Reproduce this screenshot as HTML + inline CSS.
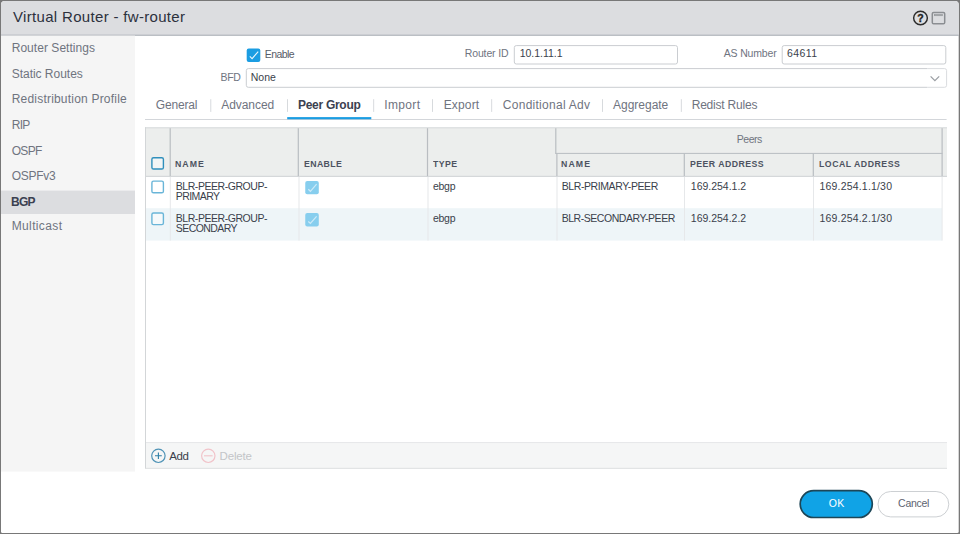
<!DOCTYPE html>
<html lang="en"><head><meta charset="utf-8"><title>Virtual Router - fw-router</title>
<style>
html,body{margin:0;padding:0;}
body{width:960px;height:534px;overflow:hidden;background:#787878;font-family:'Liberation Sans', sans-serif;position:relative;}
#bg{position:absolute;left:0;top:0;}
.t{position:absolute;white-space:pre;line-height:1;}
</style></head><body>
<svg id="bg" width="960" height="534" viewBox="0 0 960 534">
<path d="M1.0,4.5 Q1.0,1.0 4.5,1.0 H955.2 Q958.7,1.0 958.7,4.5 V531.4 Q958.7,532.9 957.2,532.9 H2.5 Q1.0,532.9 1.0,531.4 Z" fill="#ffffff" stroke="none" stroke-width="1" />
<path d="M1.0,35.2 V4.5 Q1.0,1.0 4.5,1.0 H955.2 Q958.7,1.0 958.7,4.5 V35.2 Z" fill="#dcdde0" stroke="none" stroke-width="1" />
<rect x="1.00" y="34.75" width="957.70" height="0.90" fill="#9ca2aa" />
<rect x="1.00" y="35.60" width="134.00" height="436.00" fill="#f5f5f5" />
<rect x="1.00" y="190.60" width="134.00" height="23.40" fill="#dcdde0" />
<rect x="514.30" y="45.60" width="163.20" height="18.40" fill="#fff" stroke="#cacdd1" stroke-width="1" rx="2"/>
<rect x="782.20" y="45.60" width="163.60" height="18.40" fill="#fff" stroke="#cacdd1" stroke-width="1" rx="2"/>
<rect x="246.30" y="68.60" width="700.30" height="18.70" fill="#fff" rx="2" />
<path d="M927.1,68.6 H248.3 Q246.3,68.6 246.3,70.6 V85.3 Q246.3,87.3 248.3,87.3 H927.1" fill="none" stroke="#cacdd1" stroke-width="1" />
<path d="M927.1,68.6 H944.6 Q946.6,68.6 946.6,70.6 V85.3 Q946.6,87.3 944.6,87.3 H927.1" fill="none" stroke="#dadcdf" stroke-width="1" />
<path d="M930.6 76.4 L934.9 80.6 L939.2 76.4" fill="none" stroke="#9a9ea3" stroke-width="1.25" />
<rect x="246.70" y="48.50" width="13.60" height="13.40" fill="#1b9de2" rx="2" />
<path d="M249.8 56.3 L252.1 58.6 L258.2 51.6" fill="none" stroke="#eaf6fd" stroke-width="1.1" />
<rect x="145.00" y="119.00" width="801.60" height="0.90" fill="#cfd2d6" />
<rect x="287.20" y="117.10" width="84.10" height="2.20" fill="#1b9de2" />
<rect x="210.35" y="99.20" width="0.90" height="12.70" fill="#d3d6da" />
<rect x="287.05" y="99.20" width="0.90" height="12.70" fill="#d3d6da" />
<rect x="373.25" y="99.20" width="0.90" height="12.70" fill="#d3d6da" />
<rect x="432.05" y="99.20" width="0.90" height="12.70" fill="#d3d6da" />
<rect x="491.25" y="99.20" width="0.90" height="12.70" fill="#d3d6da" />
<rect x="602.05" y="99.20" width="0.90" height="12.70" fill="#d3d6da" />
<rect x="680.85" y="99.20" width="0.90" height="12.70" fill="#d3d6da" />
<rect x="145.50" y="127.50" width="801.50" height="48.80" fill="#eceeed" />
<rect x="145.00" y="127.10" width="802.00" height="1.40" fill="#dde0e2" />
<rect x="145.00" y="127.20" width="1.00" height="341.20" fill="#d3d6d8" />
<rect x="146.00" y="175.85" width="801.00" height="1.00" fill="#cfd2d4" />
<rect x="146.00" y="208.20" width="796.00" height="32.40" fill="#eef5f8" />
<rect x="169.60" y="128.20" width="1.20" height="48.00" fill="#b9bdc1" />
<rect x="297.70" y="128.20" width="1.20" height="48.00" fill="#b9bdc1" />
<rect x="426.90" y="128.20" width="1.20" height="48.00" fill="#b9bdc1" />
<rect x="555.20" y="128.20" width="1.20" height="25.40" fill="#b9bdc1" />
<rect x="555.20" y="152.90" width="387.30" height="1.00" fill="#b9bdc1" />
<rect x="556.30" y="153.60" width="1.20" height="22.60" fill="#b9bdc1" />
<rect x="683.70" y="153.60" width="1.20" height="22.60" fill="#b9bdc1" />
<rect x="812.70" y="153.60" width="1.20" height="22.60" fill="#b9bdc1" />
<rect x="941.50" y="128.20" width="1.20" height="48.00" fill="#b9bdc1" />
<rect x="169.80" y="176.80" width="1.00" height="63.80" fill="#e6e8ea" />
<rect x="298.50" y="176.80" width="1.00" height="63.80" fill="#e6e8ea" />
<rect x="427.50" y="176.80" width="1.00" height="63.80" fill="#e6e8ea" />
<rect x="556.50" y="176.80" width="1.00" height="63.80" fill="#e6e8ea" />
<rect x="684.00" y="176.80" width="1.00" height="63.80" fill="#e6e8ea" />
<rect x="813.00" y="176.80" width="1.00" height="63.80" fill="#e6e8ea" />
<rect x="941.60" y="176.80" width="1.00" height="63.80" fill="#e6e8ea" />
<rect x="151.90" y="157.70" width="11.50" height="11.30" fill="#f3f5f5" stroke="#2f8fbc" stroke-width="1.4" rx="1.6"/>
<rect x="151.90" y="181.10" width="11.50" height="11.70" fill="#ffffff" stroke="#69b5d8" stroke-width="1.4" rx="1.6"/>
<rect x="151.90" y="213.00" width="11.50" height="11.60" fill="#f5f9fb" stroke="#69b5d8" stroke-width="1.4" rx="1.6"/>
<rect x="305.25" y="180.90" width="13.55" height="13.35" fill="#87ceee" rx="2" />
<path d="M308.3 189.3 L310.4 191.3 L316.6 184.1" fill="none" stroke="#cdeaf8" stroke-width="1.2" />
<rect x="305.25" y="213.10" width="13.55" height="13.35" fill="#87ceee" rx="2" />
<path d="M308.3 221.5 L310.4 223.5 L316.6 216.3" fill="none" stroke="#cdeaf8" stroke-width="1.2" />
<rect x="146.00" y="442.50" width="801.00" height="25.70" fill="#f5f6f6" />
<rect x="146.00" y="442.15" width="801.00" height="0.90" fill="#e3e5e7" />
<rect x="145.00" y="467.85" width="802.00" height="0.90" fill="#d9dbdd" />
<circle cx="158.4" cy="455.8" r="6.7" fill="none" stroke="#4f93b6" stroke-width="1.2"/>
<path d="M155 455.8 H161.8 M158.4 452.6 V459" fill="none" stroke="#2f7fa6" stroke-width="1.1" />
<circle cx="208.3" cy="455.8" r="6.7" fill="none" stroke="#f1c3c9" stroke-width="1.2"/>
<path d="M204 455.8 H212.6" fill="none" stroke="#f1c3c9" stroke-width="1.1" />
<rect x="800.20" y="490.60" width="72.10" height="26.90" fill="#10a3e6" stroke="#1d4657" stroke-width="1.7" rx="13.5"/>
<rect x="878.00" y="491.50" width="70.80" height="25.40" fill="#ffffff" stroke="#cdd0d3" stroke-width="1" rx="12.7"/>
<circle cx="920.5" cy="18.0" r="6.85" fill="none" stroke="#2b2b2b" stroke-width="1.45"/>
<text x="920.5" y="22" text-anchor="middle" font-family="Liberation Sans, sans-serif" font-weight="700" font-size="10.5" fill="#222" stroke="#222" stroke-width="0.35">?</text>
<rect x="932.30" y="12.50" width="12.40" height="11.30" fill="none" stroke="#8b8e92" stroke-width="1.5" rx="1.3"/>
<rect x="934.30" y="14.30" width="8.40" height="1.50" fill="#a9acaf" />
<rect x="934.30" y="14.30" width="8.40" height="1.50" fill="none" stroke="#8e9194" stroke-width="0.5"/>
</svg>
<div class="hdr">
<span class="t" style="left:13.0px;top:9px;font-size:15px;color:#2c313d;letter-spacing:0.322px;">Virtual Router - fw-router</span>
</div>
<div class="nav">
<span class="t" style="left:11.7px;top:42px;font-size:12px;color:#6f747f;letter-spacing:0.042px;">Router Settings</span>
<span class="t" style="left:11.7px;top:68px;font-size:12px;color:#6f747f;letter-spacing:-0.023px;">Static Routes</span>
<span class="t" style="left:11.7px;top:93px;font-size:12px;color:#6f747f;letter-spacing:0.204px;">Redistribution Profile</span>
<span class="t" style="left:11.7px;top:119px;font-size:12px;color:#6f747f;letter-spacing:-0.700px;">RIP</span>
<span class="t" style="left:11.7px;top:145px;font-size:12px;color:#6f747f;letter-spacing:-0.700px;">OSPF</span>
<span class="t" style="left:11.7px;top:170px;font-size:12px;color:#6f747f;letter-spacing:-0.252px;">OSPFv3</span>
<span class="t" style="left:11.7px;top:220px;font-size:12px;color:#6f747f;letter-spacing:0.370px;">Multicast</span>
<span class="t" style="left:11.0px;top:196px;font-size:12px;color:#3b4150;letter-spacing:-0.700px;font-weight:700;">BGP</span>
</div>
<div class="form">
<span class="t" style="left:264.7px;top:49px;font-size:10.5px;color:#565c68;letter-spacing:-0.541px;">Enable</span>
<span class="t" style="left:464.7px;top:48px;font-size:10.5px;color:#6f747f;letter-spacing:-0.117px;">Router ID</span>
<span class="t" style="left:723.7px;top:48px;font-size:10.5px;color:#6f747f;letter-spacing:-0.160px;">AS Number</span>
<span class="t" style="left:220.5px;top:72px;font-size:10.5px;color:#6f747f;letter-spacing:-0.350px;">BFD</span>
<span class="t" style="left:519.7px;top:48px;font-size:10.5px;color:#3a3f4b;letter-spacing:-0.027px;">10.1.11.1</span>
<span class="t" style="left:787.0px;top:48px;font-size:10.5px;color:#3a3f4b;letter-spacing:0.395px;">64611</span>
<span class="t" style="left:250.8px;top:72px;font-size:10.5px;color:#3a3f4b;letter-spacing:-0.036px;">None</span>
</div>
<div class="tabs">
<span class="t" style="left:155.8px;top:99px;font-size:12px;color:#6f747f;letter-spacing:-0.167px;">General</span>
<span class="t" style="left:221.2px;top:99px;font-size:12px;color:#6f747f;letter-spacing:-0.054px;">Advanced</span>
<span class="t" style="left:384.2px;top:99px;font-size:12px;color:#6f747f;letter-spacing:0.357px;">Import</span>
<span class="t" style="left:443.7px;top:99px;font-size:12px;color:#6f747f;letter-spacing:0.163px;">Export</span>
<span class="t" style="left:502.8px;top:99px;font-size:12px;color:#6f747f;letter-spacing:0.272px;">Conditional Adv</span>
<span class="t" style="left:613.0px;top:99px;font-size:12px;color:#6f747f;letter-spacing:-0.011px;">Aggregate</span>
<span class="t" style="left:691.7px;top:99px;font-size:12px;color:#6f747f;letter-spacing:-0.203px;">Redist Rules</span>
<span class="t" style="left:298.0px;top:99px;font-size:12px;color:#3b4150;letter-spacing:-0.284px;font-weight:700;">Peer Group</span>
</div>
<div class="grid-head">
<span class="t" style="left:175.3px;top:159.4px;font-size:9.5px;color:#4d5361;letter-spacing:1.143px;transform:scaleX(0.92);transform-origin:0 0;font-weight:700;">NAME</span>
<span class="t" style="left:304.2px;top:159.4px;font-size:9.5px;color:#4d5361;letter-spacing:0.405px;transform:scaleX(0.92);transform-origin:0 0;font-weight:700;">ENABLE</span>
<span class="t" style="left:433.0px;top:159.4px;font-size:9.5px;color:#4d5361;letter-spacing:0.425px;transform:scaleX(0.92);transform-origin:0 0;font-weight:700;">TYPE</span>
<span class="t" style="left:561.3px;top:159.4px;font-size:9.5px;color:#4d5361;letter-spacing:1.200px;transform:scaleX(0.92);transform-origin:0 0;font-weight:700;">NAME</span>
<span class="t" style="left:689.7px;top:159.4px;font-size:9.5px;color:#4d5361;letter-spacing:0.490px;transform:scaleX(0.92);transform-origin:0 0;font-weight:700;">PEER ADDRESS</span>
<span class="t" style="left:818.7px;top:159.4px;font-size:9.5px;color:#4d5361;letter-spacing:0.544px;transform:scaleX(0.92);transform-origin:0 0;font-weight:700;">LOCAL ADDRESS</span>
<span class="t" style="left:736.8px;top:134px;font-size:10.5px;color:#6f747f;letter-spacing:-0.484px;">Peers</span>
</div>
<div class="grid-body">
<span class="t" style="left:175.8px;top:181px;font-size:10.5px;color:#3a3f4b;letter-spacing:-0.451px;">BLR-PEER-GROUP-</span>
<span class="t" style="left:175.8px;top:191px;font-size:10.5px;color:#3a3f4b;letter-spacing:-0.576px;">PRIMARY</span>
<span class="t" style="left:175.8px;top:213px;font-size:10.5px;color:#3a3f4b;letter-spacing:-0.451px;">BLR-PEER-GROUP-</span>
<span class="t" style="left:175.8px;top:223px;font-size:10.5px;color:#3a3f4b;letter-spacing:-0.579px;">SECONDARY</span>
<span class="t" style="left:433.0px;top:181px;font-size:10.5px;color:#3a3f4b;letter-spacing:-0.286px;">ebgp</span>
<span class="t" style="left:433.0px;top:213px;font-size:10.5px;color:#3a3f4b;letter-spacing:-0.286px;">ebgp</span>
<span class="t" style="left:561.7px;top:181px;font-size:10.5px;color:#3a3f4b;letter-spacing:-0.407px;">BLR-PRIMARY-PEER</span>
<span class="t" style="left:561.7px;top:213px;font-size:10.5px;color:#3a3f4b;letter-spacing:-0.457px;">BLR-SECONDARY-PEER</span>
<span class="t" style="left:690.8px;top:181px;font-size:10.5px;color:#3a3f4b;letter-spacing:-0.007px;">169.254.1.2</span>
<span class="t" style="left:690.8px;top:213px;font-size:10.5px;color:#3a3f4b;letter-spacing:-0.007px;">169.254.2.2</span>
<span class="t" style="left:819.5px;top:181px;font-size:10.5px;color:#3a3f4b;letter-spacing:0.186px;">169.254.1.1/30</span>
<span class="t" style="left:819.5px;top:213px;font-size:10.5px;color:#3a3f4b;letter-spacing:0.186px;">169.254.2.1/30</span>
</div>
<div class="grid-toolbar">
<span class="t" style="left:169.2px;top:451px;font-size:11.5px;color:#3a3f4b;letter-spacing:-0.434px;">Add</span>
<span class="t" style="left:219.5px;top:451px;font-size:11.5px;color:#c3c5c8;letter-spacing:-0.150px;">Delete</span>
</div>
<div class="buttons">
<span class="t" style="left:828.8px;top:498px;font-size:10.5px;color:#ffffff;letter-spacing:0.328px;">OK</span>
<span class="t" style="left:898.1px;top:498px;font-size:10.5px;color:#5d6370;letter-spacing:-0.278px;">Cancel</span>
</div>
</body></html>
